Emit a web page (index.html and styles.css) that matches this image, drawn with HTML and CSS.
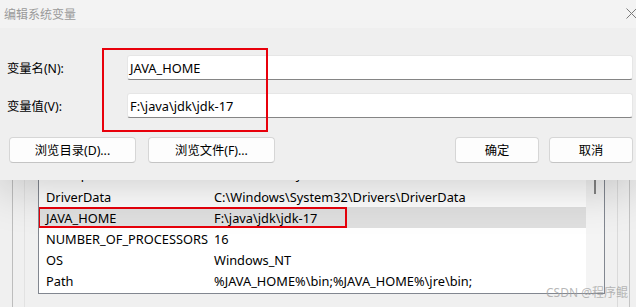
FILE: index.html
```html
<!DOCTYPE html>
<html lang="zh-CN">
<head>
  <meta charset="UTF-8">
  <title>编辑系统变量</title>
  <link rel="stylesheet" href="styles.css">
</head>
<body>
  <div class="screen">
    <!-- window behind the dialog -->
    <div class="behind">
      <div class="side-left"></div>
      <div class="listbox">
        <div class="rows">
          <div class="row"><span class="c1">ComSpec</span><span class="c2">C:\Windows\system32\cmd.exe</span></div>
          <div class="row"><span class="c1">DriverData</span><span class="c2">C:\Windows\System32\Drivers\DriverData</span></div>
          <div class="row sel">
            <span class="c1">JAVA_HOME</span><span class="c2">F:\java\jdk\jdk-17</span>
            <div class="mark-row"></div>
          </div>
          <div class="row"><span class="c1">NUMBER_OF_PROCESSORS</span><span class="c2">16</span></div>
          <div class="row"><span class="c1">OS</span><span class="c2">Windows_NT</span></div>
          <div class="row"><span class="c1">Path</span><span class="c2">%JAVA_HOME%\bin;%JAVA_HOME%\jre\bin;</span></div>
        </div>
        <div class="vscroll"><div class="thumb"></div></div>
      </div>
      <div class="side-right"></div>
    </div>

    <!-- dialog -->
    <div class="dialog">
      <div class="titlebar">
        <span class="title">编辑系统变量</span>
        <svg class="close" width="11" height="11" viewBox="0 0 11 11">
          <path d="M0.5 0.5 L10.5 10.5 M10.5 0.5 L0.5 10.5" stroke="#7a7a7a" stroke-width="1" fill="none"/>
        </svg>
      </div>
      <div class="dlg-body">
        <div class="field">
          <label>变量名(N):</label>
          <div class="input">JAVA_HOME</div>
        </div>
        <div class="field">
          <label>变量值(V):</label>
          <div class="input">F:\java\jdk\jdk-17</div>
        </div>
        <div class="buttons">
          <div class="btn wide">浏览目录(D)...</div>
          <div class="btn wide">浏览文件(F)...</div>
          <div class="spacer"></div>
          <div class="btn">确定</div>
          <div class="btn">取消</div>
        </div>
        <div class="mark-inputs"></div>
      </div>
    </div>

    <div class="watermark">CSDN @程序鲲</div>
  </div>
</body>
</html>
```

FILE: styles.css
```css
* {
  margin: 0;
  padding: 0;
  box-sizing: border-box;
}

body {
  font-family: "Noto Sans", "Noto Sans CJK SC", sans-serif;
  font-size: 12.8px;
  color: #000;
  background: #f0f0f0;
  overflow: hidden;
}

.screen {
  position: relative;
  width: 636px;
  height: 307px;
  overflow: hidden;
}

/* background window */
.behind {
  display: flex;
  height: 307px;
  align-items: flex-end;
}

.side-left {
  width: 38px;
  height: 100%;
  border-left: 12px solid #f0f0f0;
  background: linear-gradient(to right, #bdbdbd 0, #bdbdbd 1px, #f0f0f0 1px, #f0f0f0 12px, #e2e2e2 12px, #e2e2e2 13px, #f0f0f0 13px);
}

.listbox {
  width: 567px;
  height: 194px;
  margin-bottom: 13px;
  border: 1px solid #828790;
  background: #fff;
  display: flex;
}

.rows {
  flex: 1;
  display: flex;
  flex-direction: column;
  justify-content: flex-end;
  padding-bottom: 2px;
  overflow: hidden;
}

.row {
  position: relative;
  display: flex;
  align-items: center;
  height: 21px;
  flex-shrink: 0;
  padding-left: 7px;
  white-space: nowrap;
}

.row:first-child {
  padding-bottom: 4px;
}

.row.sel {
  background: #e0e0e0;
}

.c1 {
  width: 168px;
  flex-shrink: 0;
}

.mark-row {
  position: absolute;
  left: -1px;
  top: 0;
  width: 309px;
  height: 21px;
  border: 2px solid #e8000b;
}

.vscroll {
  width: 18px;
  background: #f4f4f4;
  padding-top: 60px;
}

.thumb {
  width: 2px;
  height: 33px;
  margin-left: 8px;
  background: #858585;
}

.side-right {
  flex: 1;
  height: 100%;
  background: linear-gradient(to right, #f0f0f0 0, #f0f0f0 12px, #dadada 12px, #dadada 13px, #f0f0f0 13px, #f0f0f0 24px, #c4c4c4 24px, #c4c4c4 25px, #f0f0f0 25px);
}

/* dialog */
.dialog {
  position: absolute;
  z-index: 2;
  left: 0;
  top: 0;
  width: 636px;
  height: 180px;
  background: #efefef;
  box-shadow: 0 8px 44px rgba(0, 0, 0, 0.2);
}

.titlebar {
  height: 28px;
  background: #f3f3f3;
  display: flex;
  align-items: center;
  justify-content: space-between;
  padding-left: 4px;
}

.title {
  color: #9a9a9a;
  font-size: 12px;
  margin-top: -1px;
}

.close {
  margin-right: -1px;
  margin-top: -1px;
}

.dlg-body {
  position: relative;
  padding: 27px 3px 17px 7px;
}

.field {
  display: flex;
  align-items: center;
  height: 25px;
  margin-bottom: 13px;
}

.field label {
  width: 120px;
  font-size: 12.3px;
}

.input {
  flex: 1;
  height: 25px;
  background: #fff;
  border: 1px solid #e6e6e6;
  border-bottom: 1px solid #858585;
  border-radius: 3px;
  padding-left: 2px;
  display: flex;
  align-items: center;
}

.buttons {
  display: flex;
  margin-top: 19px;
  padding-left: 2px;
  gap: 12px;
}

.spacer {
  flex: 1;
}

.btn {
  width: 84px;
  height: 26px;
  background: #fdfdfd;
  border: 1px solid #d6d6d6;
  border-bottom-color: #c4c4c4;
  border-radius: 4px;
  display: flex;
  align-items: center;
  justify-content: center;
  font-size: 12.3px;
}

.btn.wide {
  width: 127px;
}

.btn + .btn:last-child {
  margin-left: -2px;
}

.mark-inputs {
  position: absolute;
  left: 102px;
  top: 20px;
  width: 166px;
  height: 84px;
  border: 2px solid #e8000b;
}

.watermark {
  position: absolute;
  right: 8px;
  bottom: 6px;
  color: rgba(160, 160, 160, 0.75);
  font-size: 12px;
}
```
